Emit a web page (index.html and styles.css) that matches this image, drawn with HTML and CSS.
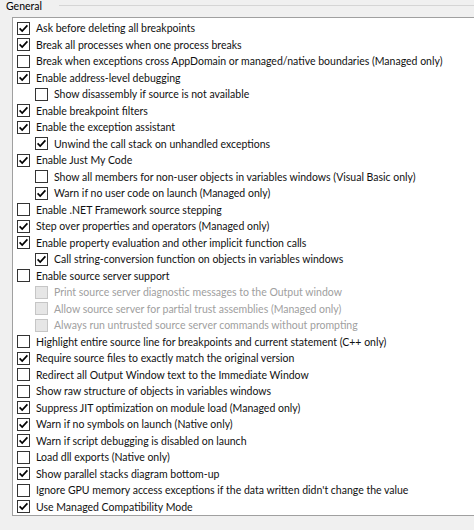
FILE: index.html
```html
<!DOCTYPE html>
<html>
<head>
<meta charset="utf-8">
<link rel="stylesheet" href="styles.css">
</head>
<body>
<div class="group">
  <div class="group-head"><span class="group-title">General</span><span class="group-line"></span></div>
  <div class="panel">
    <div class="row"><span class="cb on"></span><span class="lbl">Ask before deleting all breakpoints</span></div>
    <div class="row"><span class="cb on"></span><span class="lbl">Break all processes when one process breaks</span></div>
    <div class="row"><span class="cb"></span><span class="lbl">Break when exceptions cross AppDomain or managed/native boundaries (Managed only)</span></div>
    <div class="row"><span class="cb on"></span><span class="lbl">Enable address-level debugging</span></div>
    <div class="row sub"><span class="cb"></span><span class="lbl">Show disassembly if source is not available</span></div>
    <div class="row"><span class="cb on"></span><span class="lbl">Enable breakpoint filters</span></div>
    <div class="row"><span class="cb on"></span><span class="lbl">Enable the exception assistant</span></div>
    <div class="row sub"><span class="cb on"></span><span class="lbl">Unwind the call stack on unhandled exceptions</span></div>
    <div class="row"><span class="cb on"></span><span class="lbl">Enable Just My Code</span></div>
    <div class="row sub"><span class="cb"></span><span class="lbl">Show all members for non-user objects in variables windows (Visual Basic only)</span></div>
    <div class="row sub"><span class="cb on"></span><span class="lbl">Warn if no user code on launch (Managed only)</span></div>
    <div class="row"><span class="cb"></span><span class="lbl">Enable .NET Framework source stepping</span></div>
    <div class="row"><span class="cb on"></span><span class="lbl">Step over properties and operators (Managed only)</span></div>
    <div class="row"><span class="cb on"></span><span class="lbl">Enable property evaluation and other implicit function calls</span></div>
    <div class="row sub"><span class="cb on"></span><span class="lbl">Call string-conversion function on objects in variables windows</span></div>
    <div class="row"><span class="cb"></span><span class="lbl">Enable source server support</span></div>
    <div class="row sub off"><span class="cb"></span><span class="lbl">Print source server diagnostic messages to the Output window</span></div>
    <div class="row sub off"><span class="cb"></span><span class="lbl">Allow source server for partial trust assemblies (Managed only)</span></div>
    <div class="row sub off"><span class="cb"></span><span class="lbl">Always run untrusted source server commands without prompting</span></div>
    <div class="row"><span class="cb"></span><span class="lbl">Highlight entire source line for breakpoints and current statement (C++ only)</span></div>
    <div class="row"><span class="cb on"></span><span class="lbl">Require source files to exactly match the original version</span></div>
    <div class="row"><span class="cb"></span><span class="lbl">Redirect all Output Window text to the Immediate Window</span></div>
    <div class="row"><span class="cb"></span><span class="lbl">Show raw structure of objects in variables windows</span></div>
    <div class="row"><span class="cb on"></span><span class="lbl">Suppress JIT optimization on module load (Managed only)</span></div>
    <div class="row"><span class="cb on"></span><span class="lbl">Warn if no symbols on launch (Native only)</span></div>
    <div class="row"><span class="cb on"></span><span class="lbl">Warn if script debugging is disabled on launch</span></div>
    <div class="row"><span class="cb"></span><span class="lbl">Load dll exports (Native only)</span></div>
    <div class="row"><span class="cb on"></span><span class="lbl">Show parallel stacks diagram bottom-up</span></div>
    <div class="row"><span class="cb"></span><span class="lbl">Ignore GPU memory access exceptions if the data written didn't change the value</span></div>
    <div class="row"><span class="cb on"></span><span class="lbl">Use Managed Compatibility Mode</span></div>
  </div>
</div>
</body>
</html>
```
FILE: styles.css
```css
html, body {
  margin: 0;
  padding: 0;
  background: #f0f0f0;
  overflow: hidden;
}
body {
  width: 474px;
  height: 530px;
  font-family: Lato, "Liberation Sans", sans-serif;
  font-size: 10.5px;
  color: #000;
}
.group-head {
  display: flex;
  align-items: center;
  height: 10px;
  padding-left: 6px;
}
.group-title {
  line-height: 10px;
  margin-top: 1px;
  font-size: 10.5px;
}
.group-line {
  flex: 1;
  height: 0;
  border-top: 1px solid #d5d5d5;
  margin-left: 17px;
}
.panel {
  margin-top: 7px;
  margin-left: 12px;
  width: 480px;
  height: 499px;
  box-sizing: border-box;
  background: #fff;
  border: 1px solid #a0a0a0;
  padding: 2px 0 0 4px;
}
.row {
  display: flex;
  align-items: center;
  height: 16.5px;
  white-space: nowrap;
}
.row.sub {
  padding-left: 18px;
}
.lbl {
  color: #111;
}
.cb {
  flex: none;
  width: 13px;
  height: 13px;
  box-sizing: border-box;
  border: 1px solid #333;
  background: #fff;
  margin-right: 6px;
}
.cb.on {
  background: #fff url("data:image/svg+xml,%3Csvg xmlns='http://www.w3.org/2000/svg' width='11' height='11' viewBox='0 0 11 11'%3E%3Cpath d='M1.6 5.4 L4.2 8 L9.4 2.4' fill='none' stroke='%23000' stroke-width='1.7'/%3E%3C/svg%3E") no-repeat 0 0;
}
.row.off .cb {
  border-color: #c6c6c6;
  background: #e6e6e6;
}
.row.off .lbl {
  color: #a0a0a0;
}
```
